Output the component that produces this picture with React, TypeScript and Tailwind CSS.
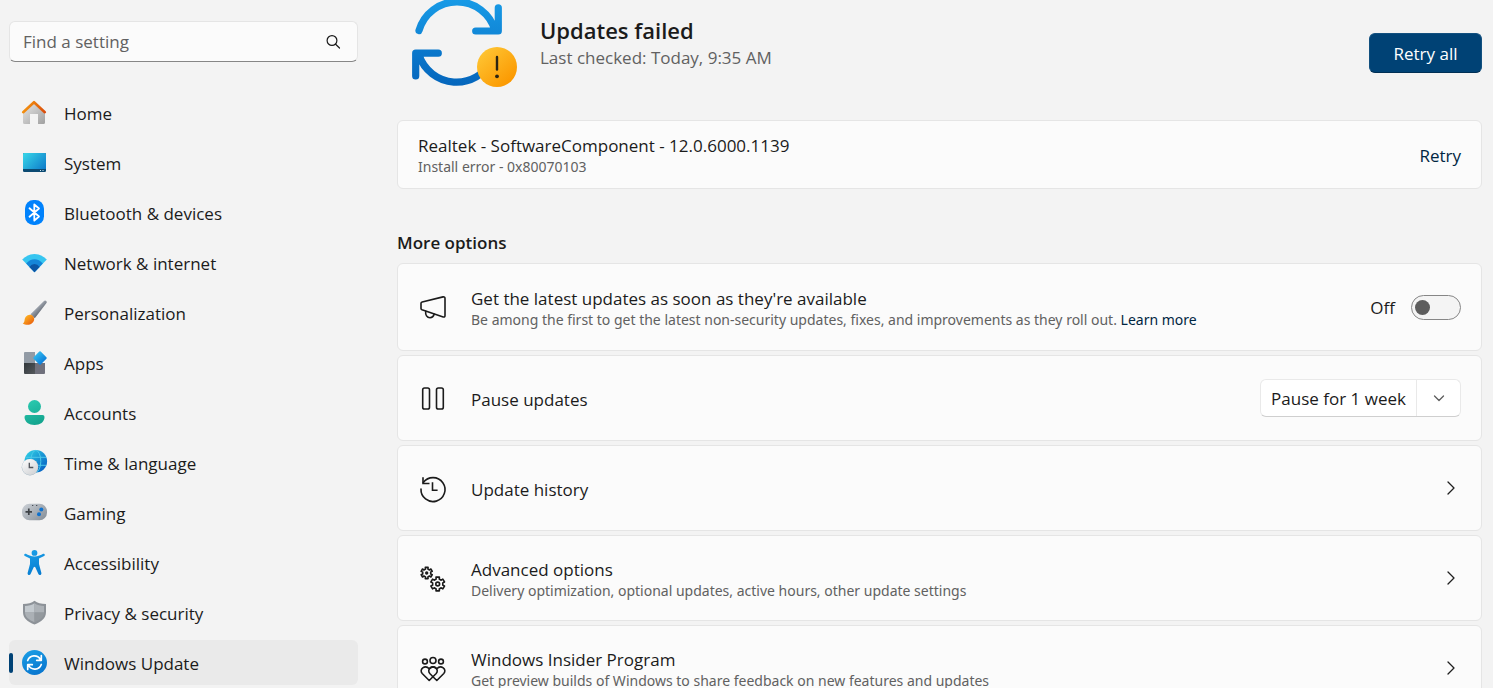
import { useState } from "react";
import type { ReactNode } from "react";

function gearPath(cx: number, cy: number, outer: number, inner: number) {
    const points: string[] = [];
    for (let i = 0; i < 6; i++) {
        const base = (i * Math.PI) / 3 - Math.PI / 2;
        const add = (offset: number, r: number) => {
            const x = cx + r * Math.cos(base + offset);
            const y = cy + r * Math.sin(base + offset);
            points.push(`${x.toFixed(2)} ${y.toFixed(2)}`);
        };
        add(-0.3, inner);
        add(-0.24, outer);
        add(0.24, outer);
        add(0.3, inner);
    }
    return `M${points.join("L")}Z`;
}

function NavSvg({ children }: { children: ReactNode }) {
    return (
        <svg className="h-[27px] w-[27px] shrink-0" viewBox="0 0 27 27" fill="none" aria-hidden="true">
            {children}
        </svg>
    );
}

function LineSvg({ children }: { children: ReactNode }) {
    return (
        <svg
            className="h-[26px] w-[26px] shrink-0 overflow-visible"
            viewBox="0 0 26 26"
            fill="none"
            stroke="#1b1b1b"
            strokeWidth="1.6"
            strokeLinecap="round"
            strokeLinejoin="round"
            aria-hidden="true"
        >
            {children}
        </svg>
    );
}

function HomeIcon() {
    return (
        <NavSvg>
            <defs>
                <linearGradient id="homeBody" x1="4" y1="6" x2="22" y2="25" gradientUnits="userSpaceOnUse">
                    <stop stopColor="#e0e0e0" />
                    <stop offset="1" stopColor="#a3a3a3" />
                </linearGradient>
                <linearGradient id="homeRoof" x1="4" y1="4" x2="24" y2="14" gradientUnits="userSpaceOnUse">
                    <stop stopColor="#f5960f" />
                    <stop offset="1" stopColor="#d94a0b" />
                </linearGradient>
            </defs>
            <path d="M13 4.500 2 14.500V23.500Q2 25 3.500 25H9V15H17V25H22.500Q24 25 24 23.500V14.500Z" fill="url(#homeBody)" />
            <path d="M2.200 13.200 13 3.200 23.800 13.200" stroke="url(#homeRoof)" strokeWidth="2.600" strokeLinecap="round" strokeLinejoin="round" />
        </NavSvg>
    );
}

function SystemIcon() {
    return (
        <NavSvg>
            <defs>
                <linearGradient id="screen" x1="3" y1="4" x2="22" y2="22" gradientUnits="userSpaceOnUse">
                    <stop stopColor="#37d5e8" />
                    <stop offset="1" stopColor="#0f7dca" />
                </linearGradient>
            </defs>
            <rect x="2" y="4" width="23" height="19" rx="1.300" fill="#0b4a72" />
            <path d="M2 5.300Q2 4 3.300 4H23.700Q25 4 25 5.300V20H2Z" fill="url(#screen)" />
            <path d="M19 21h1v1h-1zM21.500 21h1v1h-1z" fill="#cfe6f2" />
        </NavSvg>
    );
}

function BluetoothIcon() {
    return (
        <NavSvg>
            <rect x="4" y="1" width="19" height="25" rx="8.500" fill="#0082fc" />
            <path d="M8.500 9.300 18 17.500 13.300 21.600V5.500L18 9.500 8.500 17.700" stroke="#fff" strokeWidth="1.800" strokeLinejoin="round" strokeLinecap="round" />
        </NavSvg>
    );
}

function NetworkIcon() {
    return (
        <NavSvg>
            <path d="M13.500 23.200 1.200 10.600Q6.500 5 13.500 5T25.800 10.600Z" fill="#36c5f0" />
            <path d="M13.500 23.200 5.200 14.600Q8.800 10.200 13.500 10.200T21.800 14.600Z" fill="#1585d8" />
            <path d="M13.500 23.200 8.400 17.900Q10.500 15.100 13.500 15.100T18.600 17.900Z" fill="#0b55a4" />
        </NavSvg>
    );
}

function BrushIcon() {
    return (
        <NavSvg>
            <defs>
                <linearGradient id="handle" x1="14" y1="9" x2="19" y2="14" gradientUnits="userSpaceOnUse">
                    <stop stopColor="#a9afb8" />
                    <stop offset="1" stopColor="#646b76" />
                </linearGradient>
                <linearGradient id="bristle" x1="5" y1="17" x2="12" y2="25" gradientUnits="userSpaceOnUse">
                    <stop stopColor="#fdb022" />
                    <stop offset="1" stopColor="#e85d0c" />
                </linearGradient>
            </defs>
            <path d="M9.500 15.300 22.700 2.200Q24.100 1 25.300 2.100T25.100 4.600L13.800 19.200Z" fill="url(#handle)" />
            <path d="M1.700 24.500C4.400 23.400 2.700 20.400 4.800 17.800 6.800 15.300 10 15 12 17.200 14 19.400 13.300 22.400 11 24.300 8.300 26.500 4.200 26 1.700 24.500Z" fill="url(#bristle)" />
        </NavSvg>
    );
}

function AppsIcon() {
    return (
        <NavSvg>
            <defs>
                <linearGradient id="appsDiamond" x1="14" y1="4" x2="23" y2="14" gradientUnits="userSpaceOnUse">
                    <stop stopColor="#35c1f1" />
                    <stop offset="1" stopColor="#0878d8" />
                </linearGradient>
                <linearGradient id="appsDark" x1="3" y1="14" x2="14" y2="25" gradientUnits="userSpaceOnUse">
                    <stop stopColor="#30363a" />
                    <stop offset="1" stopColor="#55595d" />
                </linearGradient>
            </defs>
            <path d="M3 4Q3 3 4 3H14V14H3Z" fill="#929ba5" />
            <path d="M3 14H14V25H4Q3 25 3 24Z" fill="url(#appsDark)" />
            <path d="M14 14H24V24Q24 25 23 25H14Z" fill="#6f707c" />
            <path d="M18.300 2.500Q19 1.800 19.700 2.500L25.400 8.200Q26.200 9 25.400 9.800L19.700 15.500Q19 16.200 18.300 15.500L12.600 9.800Q11.800 9 12.600 8.200Z" fill="url(#appsDiamond)" />
        </NavSvg>
    );
}

function AccountsIcon() {
    return (
        <NavSvg>
            <defs>
                <linearGradient id="person" x1="7" y1="1" x2="18" y2="26" gradientUnits="userSpaceOnUse">
                    <stop stopColor="#2bcbb1" />
                    <stop offset="1" stopColor="#12a28c" />
                </linearGradient>
            </defs>
            <circle cx="13.500" cy="7.500" r="6.500" fill="url(#person)" />
            <path d="M3.500 18Q3.500 16 5.500 16H21.500Q23.500 16 23.500 18C23.500 23 19 26 13.500 26S3.500 23 3.500 18Z" fill="url(#person)" />
        </NavSvg>
    );
}

function TimeIcon() {
    return (
        <NavSvg>
            <defs>
                <linearGradient id="globe" x1="7" y1="4" x2="23" y2="20" gradientUnits="userSpaceOnUse">
                    <stop stopColor="#2cc5e2" />
                    <stop offset="1" stopColor="#0867c6" />
                </linearGradient>
                <linearGradient id="clock" x1="4" y1="11" x2="14" y2="26" gradientUnits="userSpaceOnUse">
                    <stop stopColor="#fafafa" />
                    <stop offset="1" stopColor="#cfd1d4" />
                </linearGradient>
            </defs>
            <circle cx="14.800" cy="12.300" r="11.300" fill="url(#globe)" />
            <g stroke="#4cc9ea" strokeWidth="1">
                <ellipse cx="14.800" cy="12.300" rx="5" ry="10.900" />
                <path d="M4.700 8.300H25M3.700 16.300H25" />
            </g>
            <circle cx="9" cy="18.200" r="8.300" fill="#9fb4c2" />
            <circle cx="9" cy="18" r="8" fill="url(#clock)" />
            <path d="M8.300 13.700V18.500H12.300" stroke="#50545a" strokeWidth="1.300" />
        </NavSvg>
    );
}

function GamingIcon() {
    return (
        <NavSvg>
            <defs>
                <linearGradient id="pad" x1="5" y1="5" x2="20" y2="22" gradientUnits="userSpaceOnUse">
                    <stop stopColor="#c6cbd1" />
                    <stop offset="1" stopColor="#8c949d" />
                </linearGradient>
            </defs>
            <rect x="1" y="4.700" width="25" height="16.500" rx="7.500" fill="url(#pad)" />
            <path d="M7.800 9.500V16M4.500 12.800H11" stroke="#3e4247" strokeWidth="1.700" />
            <circle cx="20.300" cy="10.500" r="2" fill="#0f72cf" />
            <circle cx="18" cy="15.300" r="2" fill="#0f72cf" />
            <path d="M11 6h1.300v1H11zM15 6h1.300v1H15z" fill="#4b5057" />
        </NavSvg>
    );
}

function AccessibilityIcon() {
    return (
        <NavSvg>
            <defs>
                <linearGradient id="access" x1="8" y1="1" x2="18" y2="26" gradientUnits="userSpaceOnUse">
                    <stop stopColor="#1ba0e8" />
                    <stop offset="1" stopColor="#067bd0" />
                </linearGradient>
            </defs>
            <circle cx="13.500" cy="3.900" r="2.900" fill="url(#access)" />
            <path
                d="M4.900 4.800C7 6 10 7.500 13.500 7.500S20 6 22.100 4.800C23.600 4.100 24.600 6.200 23.100 7L18 9.500V15L20.400 24C20.800 26.200 18 26.700 17.400 25L14.300 18.300Q13.500 17 12.700 18.300L9.600 25C9 26.700 6.200 26.200 6.600 24L9 15V9.500L3.900 7C2.400 6.200 3.400 4.100 4.900 4.800Z"
                fill="url(#access)"
            />
        </NavSvg>
    );
}

function PrivacyIcon() {
    return (
        <NavSvg>
            <path d="M13.500 1.800C16.500 4.200 20 5 25 5V13C25 19 20.500 23 13.500 25.400 6.500 23 2 19 2 13V5C7 5 10.500 4.200 13.500 1.800Z" fill="#8d9298" />
            <path d="M13.500 4.200V13.500H4V7C7.500 6.900 11 6.200 13.500 4.200Z" fill="#c3c9ce" />
            <path d="M13.500 4.200V13.500H23V7C19.500 6.900 16 6.200 13.500 4.200Z" fill="#adb2b7" />
            <path d="M13.500 13.500V23.200C8 21 4 18 4 13.500Z" fill="#abb0b5" />
            <path d="M13.500 13.500V23.200C19 21 23 18 23 13.500Z" fill="#94999e" />
        </NavSvg>
    );
}

function UpdateIcon() {
    return (
        <NavSvg>
            <defs>
                <linearGradient id="update" x1="8" y1="1" x2="18" y2="26" gradientUnits="userSpaceOnUse">
                    <stop stopColor="#1a9ce4" />
                    <stop offset="1" stopColor="#0875ce" />
                </linearGradient>
            </defs>
            <circle cx="13.500" cy="13.500" r="12.500" fill="url(#update)" />
            <g stroke="#fff" strokeWidth="1.700" strokeLinecap="round" strokeLinejoin="round">
                <path d="M6.700 11.500A7 7 0 0 1 19.400 10.600M20.300 6.500V11.300H15.700" />
                <path d="M20.300 15.500A7 7 0 0 1 7.600 16.400M6.700 20.500V15.700H11.300" />
            </g>
        </NavSvg>
    );
}

function SyncFailedIcon() {
    return (
        <svg className="h-[88px] w-[106px] shrink-0" viewBox="0 0 106 88" fill="none" aria-hidden="true">
            <defs>
                <linearGradient id="syncTop" x1="0" y1="0" x2="0" y2="35" gradientUnits="userSpaceOnUse">
                    <stop stopColor="#179ae6" />
                    <stop offset="1" stopColor="#1187d7" />
                </linearGradient>
                <linearGradient id="syncBottom" x1="0" y1="50" x2="0" y2="86" gradientUnits="userSpaceOnUse">
                    <stop stopColor="#0a78cc" />
                    <stop offset="1" stopColor="#0566bc" />
                </linearGradient>
                <linearGradient id="warn" x1="72" y1="52" x2="99" y2="82" gradientUnits="userSpaceOnUse">
                    <stop stopColor="#fec230" />
                    <stop offset="1" stopColor="#fb9800" />
                </linearGradient>
            </defs>
            <g strokeWidth="7.200" strokeLinecap="round" strokeLinejoin="round">
                <path d="M7 30.500A39.500 39.500 0 0 1 83 30.500M86.300 7.800V31H63.700" stroke="url(#syncTop)" />
                <path d="M80 60A39.500 39.500 0 0 1 7 55M3.700 76V53.200H26.300" stroke="url(#syncBottom)" />
            </g>
            <circle cx="85" cy="67" r="20" fill="url(#warn)" />
            <path d="M85 57V69.500" stroke="#2b2412" strokeWidth="2.400" strokeLinecap="round" />
            <circle cx="85" cy="76.300" r="1.900" fill="#2b2412" />
        </svg>
    );
}

function MegaphoneIcon() {
    return (
        <LineSvg>
            <path d="M2.200 8 23 2.900Q25 2.600 25 4.400V21.500Q25 23.400 23.200 23L2 15.800Q1 15.400 1 14.500V9.300Q1 8.300 2.200 8Z" />
            <path d="M5.700 17.300C5.200 21 7 23.700 10 23.700 12 23.700 13.500 22.500 14.200 20.200" />
        </LineSvg>
    );
}

function PauseIcon() {
    return (
        <LineSvg>
            <rect x="2.700" y="3" width="6.800" height="21" rx="1.800" />
            <rect x="16.500" y="3" width="6.800" height="21" rx="1.800" />
        </LineSvg>
    );
}

function HistoryIcon() {
    return (
        <LineSvg>
            <path d="M1 14A12 12 0 1 0 3.300 7.500" />
            <path d="M3 2.200V8.500H9.500M12.500 7.300V15.300H17.600" strokeLinecap="butt" strokeLinejoin="miter" />
        </LineSvg>
    );
}

function GearsIcon() {
    return (
        <LineSvg>
            <path d={gearPath(6.7, 8, 5.8, 4.1)} />
            <circle cx="6.700" cy="8" r="0.900" />
            <path d={gearPath(17.7, 19, 7.1, 5.2)} />
            <circle cx="17.700" cy="19" r="1.900" />
        </LineSvg>
    );
}

function InsiderIcon() {
    return (
        <LineSvg>
            <circle cx="5" cy="6.500" r="2.400" />
            <circle cx="13" cy="5.500" r="3" />
            <circle cx="21" cy="6.500" r="2.400" />
            <path d="M9.200 25.500 2.200 18.500C-1.400 14.500 5 9.300 9.200 13.700 13.400 9.300 19.800 14.500 16.200 18.500Z" />
            <path d="M13.200 22 16.800 25.500 23.800 18.500C27.400 14.500 21 9.300 16.800 13.700 12.600 9.300 6.200 14.500 9.800 18.500L13.200 22" />
        </LineSvg>
    );
}

function ChevronRight() {
    return (
        <svg className="h-4 w-4 shrink-0" viewBox="0 0 16 16" fill="none" stroke="#1f1f1f" strokeWidth="1.300" strokeLinecap="round" strokeLinejoin="round" aria-hidden="true">
            <path d="M5 2 11 8 5 14" />
        </svg>
    );
}

const navItems = [
    { label: "Home", icon: <HomeIcon /> },
    { label: "System", icon: <SystemIcon /> },
    { label: "Bluetooth & devices", icon: <BluetoothIcon /> },
    { label: "Network & internet", icon: <NetworkIcon /> },
    { label: "Personalization", icon: <BrushIcon /> },
    { label: "Apps", icon: <AppsIcon /> },
    { label: "Accounts", icon: <AccountsIcon /> },
    { label: "Time & language", icon: <TimeIcon /> },
    { label: "Gaming", icon: <GamingIcon /> },
    { label: "Accessibility", icon: <AccessibilityIcon /> },
    { label: "Privacy & security", icon: <PrivacyIcon /> },
    { label: "Windows Update", icon: <UpdateIcon />, active: true },
];

const links = [
    { title: "Update history", text: "", icon: <HistoryIcon /> },
    { title: "Advanced options", text: "Delivery optimization, optional updates, active hours, other update settings", icon: <GearsIcon /> },
    { title: "Windows Insider Program", text: "Get preview builds of Windows to share feedback on new features and updates", icon: <InsiderIcon /> },
];

function Description({ children }: { children: ReactNode }) {
    return <p className="font-['Noto_Sans',sans-serif] text-[14px] leading-5 text-[#616161]">{children}</p>;
}

function Sidebar() {
    const [search, setSearch] = useState("");

    return (
        <aside className="w-[349px] shrink-0 pt-[21px]">
            <div className="flex h-[41px] items-center rounded-md border border-[#e5e5e5] border-b-[#868686] bg-[#fbfbfb] pr-4 pl-[13px]">
                <input
                    className="min-w-0 flex-1 bg-transparent text-[17px] leading-6 text-[#1b1b1b] outline-none placeholder:text-[#616161]"
                    type="text"
                    aria-label="Find a setting"
                    placeholder="Find a setting"
                    value={search}
                    onChange={(e) => setSearch(e.target.value)}
                />
                <svg className="h-4 w-4" viewBox="0 0 16 16" fill="none" stroke="#1b1b1b" strokeWidth="1.200" strokeLinecap="round" aria-hidden="true">
                    <circle cx="7" cy="6.500" r="4.900" />
                    <path d="M10.600 10.200 14.500 14" />
                </svg>
            </div>

            <nav className="mt-7 flex flex-col gap-[5px]">
                {navItems.map((item) => (
                    <a
                        key={item.label}
                        href="#"
                        className={`relative flex h-[45px] items-center gap-4 rounded-md px-3 ${item.active ? "bg-[#eaeaea]" : "hover:bg-[#ededed]"}`}
                    >
                        {item.active && <span className="absolute top-[13px] left-0 h-5 w-1 rounded-full bg-[#004275]" />}
                        {item.icon}
                        <span className="pt-0.5 text-[17px] leading-[22px]">{item.label}</span>
                    </a>
                ))}
            </nav>
        </aside>
    );
}

function App() {
    const [latest, setLatest] = useState(false);

    return (
        <div className="flex h-screen gap-[39px] overflow-hidden bg-[#f3f3f3] pr-[11px] pl-[9px] font-['Open_Sans','Noto_Sans',sans-serif] text-[#1b1b1b]">
            <Sidebar />

            <main className="min-w-0 flex-1">
                <header className="flex items-start pl-[15px]">
                    <SyncFailedIcon />
                    <div className="ml-[22px] flex-1 pt-4">
                        <h1 className="text-[22px] leading-7 font-semibold">Updates failed</h1>
                        <p className="text-[17px] leading-7 text-[#616161]">Last checked: Today, 9:35 AM</p>
                    </div>
                    <button type="button" className="mt-[33px] h-10 w-[113px] rounded-md border border-[#12507f] border-b-[#002f54] bg-[#004275] pt-0.5 text-[17px] leading-6 text-white">
                        Retry all
                    </button>
                </header>

                <section className="mt-8 flex items-center justify-between rounded-md border border-[#e5e5e5] bg-[#fbfbfb] px-5 pt-[14px] pb-[11px]">
                    <div>
                        <h2 className="text-[17px] leading-[22px]">Realtek - SoftwareComponent - 12.0.6000.1139</h2>
                        <Description>Install error - 0x80070103</Description>
                    </div>
                    <button type="button" className="text-[17px] leading-6 text-[#002642]">Retry</button>
                </section>

                <h2 className="mt-[42px] mb-2 text-[17px] leading-6 font-semibold">More options</h2>

                <div className="flex flex-col gap-1">
                    <section className="flex h-[88px] shrink-0 items-center gap-[25px] rounded-md border border-[#e5e5e5] bg-[#fbfbfb] pr-5 pl-[22px]">
                        <MegaphoneIcon />
                        <div className="flex-1 pt-1">
                            <h3 id="latest-title" className="text-[17px] leading-[22px]">Get the latest updates as soon as they're available</h3>
                            <Description>
                                Be among the first to get the latest non-security updates, fixes, and improvements as they roll out.{" "}
                                <a href="#" className="text-[#002642]">Learn more</a>
                            </Description>
                        </div>
                        <label className="flex items-center gap-4 text-[17px] leading-6">
                            <span className="pt-0.5">{latest ? "On" : "Off"}</span>
                            <input
                                type="checkbox"
                                role="switch"
                                aria-labelledby="latest-title"
                                checked={latest}
                                onChange={(e) => setLatest(e.target.checked)}
                                className="flex h-[25px] w-[50px] appearance-none items-center rounded-full border border-[#868686] bg-[#f4f4f4] px-[3px] before:h-[15px] before:w-[15px] before:rounded-full before:bg-[#5d5d5d] checked:justify-end checked:bg-[#004275] checked:before:bg-white"
                            />
                        </label>
                    </section>

                    <section className="flex h-[86px] shrink-0 items-center gap-[25px] rounded-md border border-[#e5e5e5] bg-[#fbfbfb] pr-5 pl-[22px]">
                        <PauseIcon />
                        <h3 className="flex-1 pt-1 text-[17px] leading-[22px]">Pause updates</h3>
                        <div className="flex h-[38px] rounded-md border border-[#e9e9e9] border-b-[#cfcfcf] bg-white">
                            <button type="button" className="w-[156px] border-r border-[#e9e9e9] pt-0.5 text-[17px] leading-6">Pause for 1 week</button>
                            <button type="button" aria-label="More pause lengths" className="flex w-[43px] items-center justify-center">
                                <svg className="h-3 w-3" viewBox="0 0 12 12" fill="none" stroke="#5d5d5d" strokeWidth="1.300" strokeLinecap="round" strokeLinejoin="round" aria-hidden="true">
                                    <path d="M1.500 4 6 8.500 10.500 4" />
                                </svg>
                            </button>
                        </div>
                    </section>

                    {links.map((link) => (
                        <a key={link.title} href="#" className="flex h-[86px] shrink-0 items-center gap-[25px] rounded-md border border-[#e5e5e5] bg-[#fbfbfb] px-[22px]">
                            {link.icon}
                            <div className="flex-1 pt-1">
                                <h3 className="text-[17px] leading-[22px]">{link.title}</h3>
                                {link.text && <Description>{link.text}</Description>}
                            </div>
                            <ChevronRight />
                        </a>
                    ))}
                </div>
            </main>
        </div>
    );
}

export default App;
